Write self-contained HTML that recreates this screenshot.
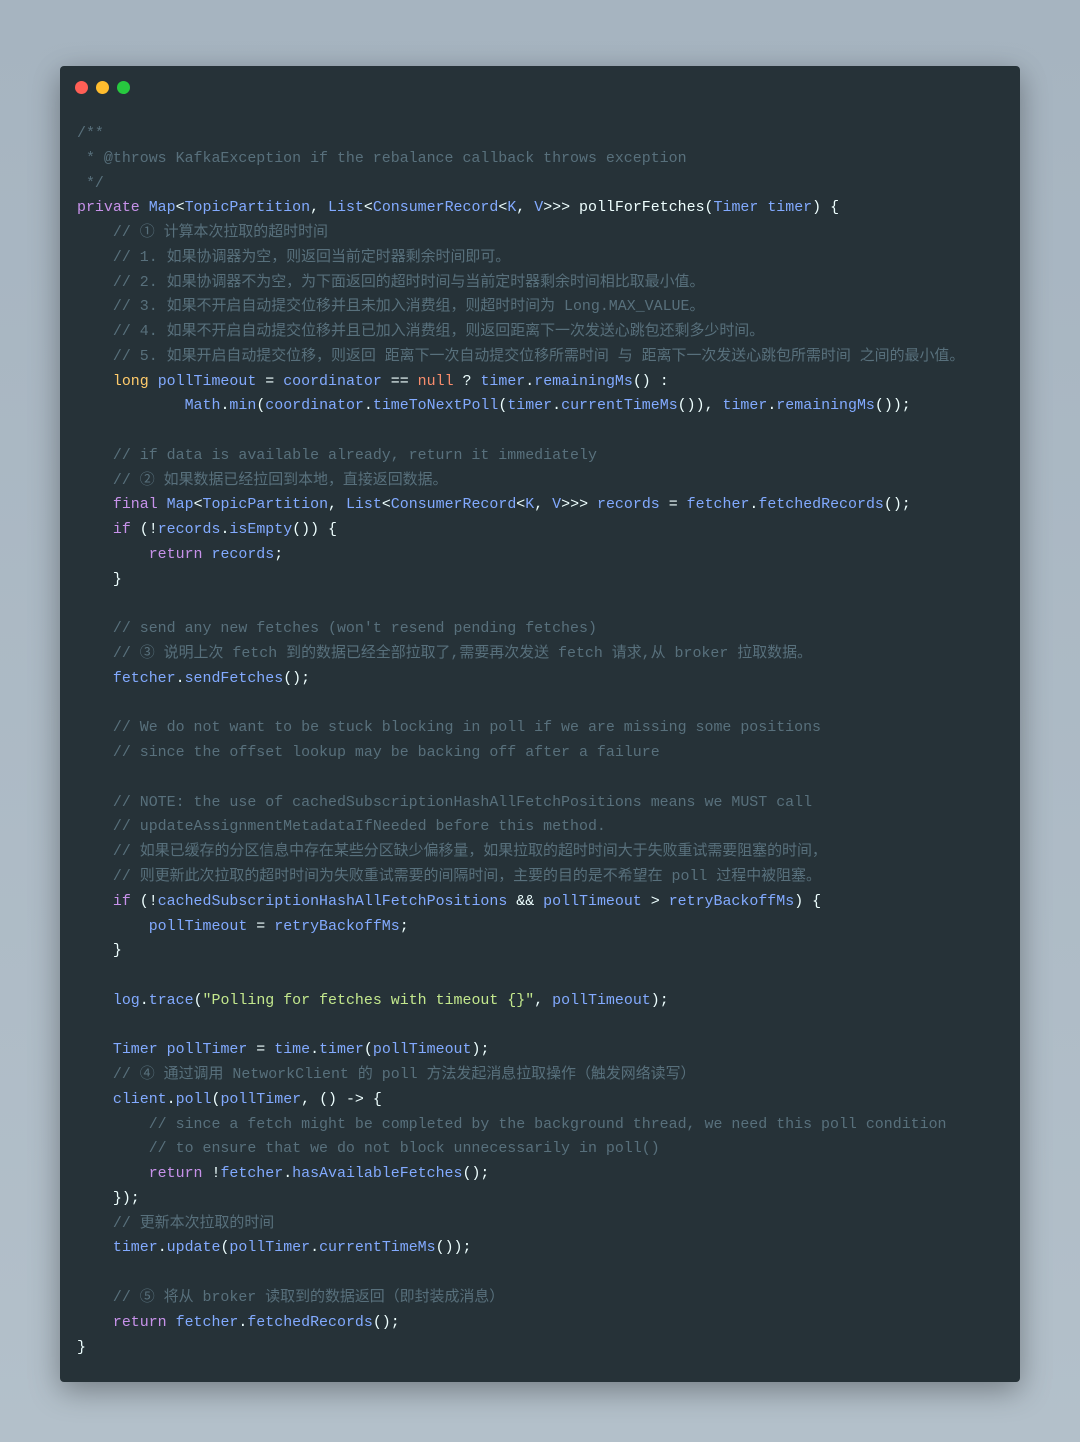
<!DOCTYPE html>
<html><head><meta charset="utf-8"><style>
html,body{margin:0;padding:0}
body{width:1080px;height:1442px;background:linear-gradient(180deg,#a6b4c0,#b3c0ca);position:relative;overflow:hidden}
.card{position:absolute;left:60px;top:66px;width:960px;height:1316px;background:#263238;border-radius:4px;box-shadow:0 8px 30px rgba(0,0,0,.35)}
.dot{position:absolute;top:81px;width:13px;height:13px;border-radius:50%}
pre{position:absolute;left:77px;top:122px;margin:0;font-family:"Liberation Mono","Noto Sans CJK SC",monospace;font-size:14.95px;line-height:24.76px;color:#eeffff;white-space:pre}
.c{color:#58707c}.p{color:#c792ea}.b{color:#82aaff}.y{color:#ffcb6b}.o{color:#f78c6c}.g{color:#c3e88d}
</style></head><body>
<div class="card"></div>
<div class="dot" style="left:75px;background:#ff5f56"></div>
<div class="dot" style="left:96px;background:#ffbd2e"></div>
<div class="dot" style="left:117px;background:#27c93f"></div>
<pre><span class="c">/**
 * @throws KafkaException if the rebalance callback throws exception
 */</span>
<span class="p">private</span> <span class="b">Map</span>&lt;<span class="b">TopicPartition</span>, <span class="b">List</span>&lt;<span class="b">ConsumerRecord</span>&lt;<span class="b">K</span>, <span class="b">V</span>&gt;&gt;&gt; pollForFetches(<span class="b">Timer</span> <span class="b">timer</span>) {
    <span class="c">// ① 计算本次拉取的超时时间</span>
    <span class="c">// 1. 如果协调器为空，则返回当前定时器剩余时间即可。</span>
    <span class="c">// 2. 如果协调器不为空，为下面返回的超时时间与当前定时器剩余时间相比取最小值。</span>
    <span class="c">// 3. 如果不开启自动提交位移并且未加入消费组，则超时时间为 Long.MAX_VALUE。</span>
    <span class="c">// 4. 如果不开启自动提交位移并且已加入消费组，则返回距离下一次发送心跳包还剩多少时间。</span>
    <span class="c">// 5. 如果开启自动提交位移，则返回 距离下一次自动提交位移所需时间 与 距离下一次发送心跳包所需时间 之间的最小值。</span>
    <span class="y">long</span> <span class="b">pollTimeout</span> = <span class="b">coordinator</span> == <span class="o">null</span> ? <span class="b">timer</span>.<span class="b">remainingMs</span>() :
            <span class="b">Math</span>.<span class="b">min</span>(<span class="b">coordinator</span>.<span class="b">timeToNextPoll</span>(<span class="b">timer</span>.<span class="b">currentTimeMs</span>()), <span class="b">timer</span>.<span class="b">remainingMs</span>());

    <span class="c">// if data is available already, return it immediately</span>
    <span class="c">// ② 如果数据已经拉回到本地，直接返回数据。</span>
    <span class="p">final</span> <span class="b">Map</span>&lt;<span class="b">TopicPartition</span>, <span class="b">List</span>&lt;<span class="b">ConsumerRecord</span>&lt;<span class="b">K</span>, <span class="b">V</span>&gt;&gt;&gt; <span class="b">records</span> = <span class="b">fetcher</span>.<span class="b">fetchedRecords</span>();
    <span class="p">if</span> (!<span class="b">records</span>.<span class="b">isEmpty</span>()) {
        <span class="p">return</span> <span class="b">records</span>;
    }

    <span class="c">// send any new fetches (won't resend pending fetches)</span>
    <span class="c">// ③ 说明上次 fetch 到的数据已经全部拉取了,需要再次发送 fetch 请求,从 broker 拉取数据。</span>
    <span class="b">fetcher</span>.<span class="b">sendFetches</span>();

    <span class="c">// We do not want to be stuck blocking in poll if we are missing some positions</span>
    <span class="c">// since the offset lookup may be backing off after a failure</span>

    <span class="c">// NOTE: the use of cachedSubscriptionHashAllFetchPositions means we MUST call</span>
    <span class="c">// updateAssignmentMetadataIfNeeded before this method.</span>
    <span class="c">// 如果已缓存的分区信息中存在某些分区缺少偏移量，如果拉取的超时时间大于失败重试需要阻塞的时间，</span>
    <span class="c">// 则更新此次拉取的超时时间为失败重试需要的间隔时间，主要的目的是不希望在 poll 过程中被阻塞。</span>
    <span class="p">if</span> (!<span class="b">cachedSubscriptionHashAllFetchPositions</span> &amp;&amp; <span class="b">pollTimeout</span> &gt; <span class="b">retryBackoffMs</span>) {
        <span class="b">pollTimeout</span> = <span class="b">retryBackoffMs</span>;
    }

    <span class="b">log</span>.<span class="b">trace</span>(<span class="g">"Polling for fetches with timeout {}"</span>, <span class="b">pollTimeout</span>);

    <span class="b">Timer</span> <span class="b">pollTimer</span> = <span class="b">time</span>.<span class="b">timer</span>(<span class="b">pollTimeout</span>);
    <span class="c">// ④ 通过调用 NetworkClient 的 poll 方法发起消息拉取操作（触发网络读写）</span>
    <span class="b">client</span>.<span class="b">poll</span>(<span class="b">pollTimer</span>, () -&gt; {
        <span class="c">// since a fetch might be completed by the background thread, we need this poll condition</span>
        <span class="c">// to ensure that we do not block unnecessarily in poll()</span>
        <span class="p">return</span> !<span class="b">fetcher</span>.<span class="b">hasAvailableFetches</span>();
    });
    <span class="c">// 更新本次拉取的时间</span>
    <span class="b">timer</span>.<span class="b">update</span>(<span class="b">pollTimer</span>.<span class="b">currentTimeMs</span>());

    <span class="c">// ⑤ 将从 broker 读取到的数据返回（即封装成消息）</span>
    <span class="p">return</span> <span class="b">fetcher</span>.<span class="b">fetchedRecords</span>();
}</pre>
</body></html>
